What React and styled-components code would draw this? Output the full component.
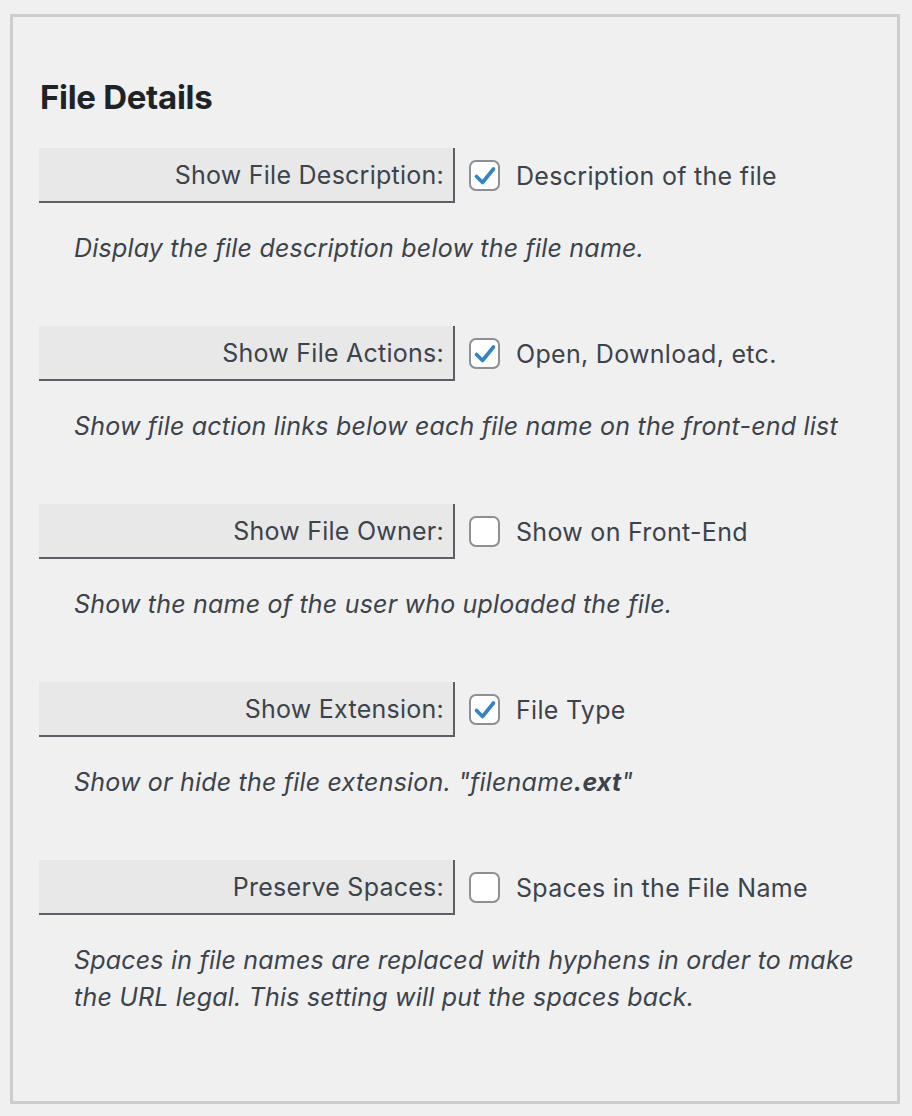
import React from "react";
import styled, { createGlobalStyle } from "styled-components";

const Global = createGlobalStyle`
  html, body { margin: 0; padding: 0; background: #f0f0f1; }
  body { font-family: Inter, "Noto Sans", "Liberation Sans", sans-serif; color: #3c434a; }
`;

const Page = styled.div`
  padding: 14px 12px 12px 10px;
  box-sizing: border-box;
  width: 912px;
`;

const Panel = styled.section`
  border: 3px solid #cdcdcd;
  background: #f0f0f1;
  height: 1090px;
  box-sizing: border-box;
  padding: 60px 26px 0 26px;
`;

const Title = styled.h2`
  margin: 0 0 31px 1px;
  font-size: 33px;
  font-weight: 700;
  color: #1d2327;
  line-height: 40px;
  letter-spacing: -0.3px;
`;

const Setting = styled.div`
  display: flex;
  flex-direction: column;
  height: 119px;
  margin-bottom: 59px;
`;

const Row = styled.div`
  display: flex;
  align-items: center;
  gap: 14px;
`;

const Label = styled.div`
  width: 414px;
  height: 53px;
  box-sizing: content-box;
  background: #e8e8e8;
  border-right: 2px solid #5c6066;
  border-bottom: 2px solid #5c6066;
  display: flex;
  align-items: center;
  justify-content: flex-end;
  font-size: 25px;
  letter-spacing: 0.25px;
  color: #3c434a;
  span { padding-right: 9px; }
`;

const Box = styled.span`
  width: 31px;
  height: 31px;
  box-sizing: border-box;
  border: 2px solid #8c8f94;
  border-radius: 7px;
  background: #fff;
  display: inline-flex;
  align-items: center;
  justify-content: center;
  flex-shrink: 0;
`;

const OptionText = styled.span`
  font-size: 25px;
  letter-spacing: 0.3px;
  color: #3c434a;
  margin-left: 2px;
`;

const Desc = styled.p`
  margin: 27px 0 0 35px;
  font-size: 25px;
  font-style: italic;
  line-height: 37px;
  letter-spacing: 0.2px;
  color: #3c434a;
  white-space: nowrap;
  b { font-weight: 700; }
`;

const Check = () => (
  <svg width="24" height="24" viewBox="0 0 24 24" aria-hidden="true">
    <path d="M3.5 12.5 L9.5 18.5 L20.5 5" fill="none" stroke="#3582c4" strokeWidth="3.6" strokeLinecap="round" strokeLinejoin="round" />
  </svg>
);

const settings = [
  { label: "Show File Description:", checked: true, option: "Description of the file", desc: "Display the file description below the file name." },
  { label: "Show File Actions:", checked: true, option: "Open, Download, etc.", desc: "Show file action links below each file name on the front-end list" },
  { label: "Show File Owner:", checked: false, option: "Show on Front-End", desc: "Show the name of the user who uploaded the file." },
  { label: "Show Extension:", checked: true, option: "File Type", desc: <>Show or hide the file extension. "filename<b>.ext</b>"</> },
  { label: "Preserve Spaces:", checked: false, option: "Spaces in the File Name", desc: <>Spaces in file names are replaced with hyphens in order to make<br />the URL legal. This setting will put the spaces back.</> },
];

export default function App() {
  return (
    <Page>
      <Global />
      <Panel>
        <Title>File Details</Title>
        {settings.map((s, i) => (
          <Setting key={i}>
            <Row>
              <Label><span>{s.label}</span></Label>
              <Box>{s.checked && <Check />}</Box>
              <OptionText>{s.option}</OptionText>
            </Row>
            <Desc>{s.desc}</Desc>
          </Setting>
        ))}
      </Panel>
    </Page>
  );
}
